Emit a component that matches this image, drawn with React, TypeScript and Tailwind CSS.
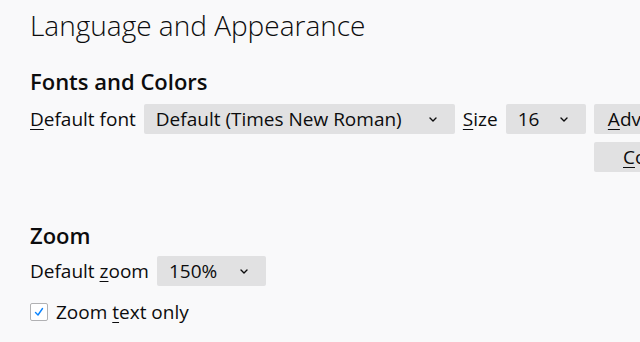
import React from "react";

const Chevron = () => (
  <svg width="8" height="5" viewBox="0 0 8 5" className="shrink-0">
    <polyline
      points="1,1 4,4 7,1"
      fill="none"
      stroke="#0c0c0d"
      strokeWidth="1.4"
      strokeLinecap="round"
      strokeLinejoin="round"
    />
  </svg>
);

interface SelectBoxProps {
  value: string;
  width: string;
}

const SelectBox: React.FC<SelectBoxProps> = ({ value, width }) => (
  <div
    className={`${width} h-[30px] shrink-0 flex items-center justify-between pl-3 pr-[18px] rounded-[2px] bg-[#e1e1e2]`}
  >
    <span className="whitespace-nowrap">{value}</span>
    <Chevron />
  </div>
);

const PrefButton: React.FC<{ children: React.ReactNode }> = ({ children }) => (
  <div className="h-[30px] w-[130px] flex items-center justify-center rounded-[2px] bg-[#e1e1e2] whitespace-nowrap">
    {children}
  </div>
);

const U: React.FC<{ children: React.ReactNode }> = ({ children }) => (
  <span className="underline underline-offset-[3px] decoration-1">{children}</span>
);

export default function App() {
  return (
    <div
      className="w-[640px] h-[342px] overflow-hidden bg-[#f9f9fa] text-[#0c0c0d] pl-[30px] pt-[5px]"
      style={{ fontFamily: '"Open Sans", "Noto Sans", sans-serif' }}
    >
      <h1 className="text-[28px] leading-[40px] font-light whitespace-nowrap">
        Language and Appearance
      </h1>

      {/* Fonts and Colors */}
      <h2 className="mt-[22px] text-[22px] leading-[28px] font-semibold">
        Fonts and Colors
      </h2>
      <div className="mt-[9px] flex items-start gap-2 text-[19px] whitespace-nowrap">
        <span className="h-[30px] flex items-center shrink-0">
          <U>D</U>efault font
        </span>
        <SelectBox value="Default (Times New Roman)" width="w-[311px]" />
        <span className="h-[30px] flex items-center shrink-0">
          <U>S</U>ize
        </span>
        <SelectBox value="16" width="w-[80px]" />
        <div className="flex flex-col gap-[8px] shrink-0">
          <PrefButton>
            <U>A</U>dvanced…
          </PrefButton>
          <PrefButton>
            <U>C</U>olors…
          </PrefButton>
        </div>
      </div>

      {/* Zoom */}
      <h2 className="mt-[49px] text-[22px] leading-[28px] font-semibold">Zoom</h2>
      <div className="mt-[7px] flex items-center gap-2 text-[19px] whitespace-nowrap">
        <span>
          Default <U>z</U>oom
        </span>
        <SelectBox value="150%" width="w-[109px]" />
      </div>
      <label className="mt-[12px] flex items-center gap-2 text-[19px]">
        <span className="w-[18px] h-[18px] shrink-0 flex items-center justify-center rounded-[2px] border border-[#b1b1b3] bg-white">
          <svg width="12" height="12" viewBox="0 0 12 12">
            <polyline
              points="2.5,6.5 5,9 9.5,2.5"
              fill="none"
              stroke="#0a84ff"
              strokeWidth="1.4"
              strokeLinecap="round"
              strokeLinejoin="round"
            />
          </svg>
        </span>
        <span>
          Zoom <U>t</U>ext only
        </span>
      </label>
    </div>
  );
}
